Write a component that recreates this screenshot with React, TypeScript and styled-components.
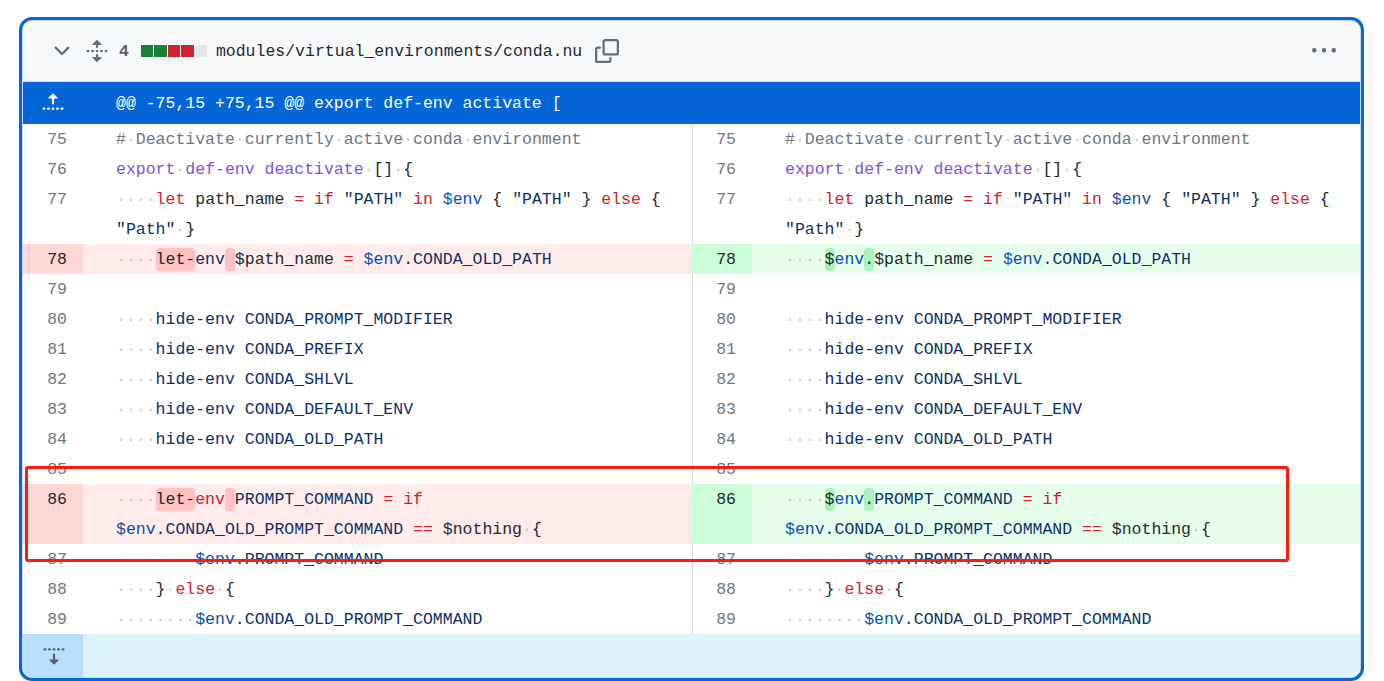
import { Fragment, ReactNode } from 'react'
import styled, { createGlobalStyle } from 'styled-components'

const mono = `'Liberation Mono', 'DejaVu Sans Mono', monospace`

const GlobalStyle = createGlobalStyle`
  html, body {
    margin: 0;
    background: #fff;
  }
`

type RowKind = 'context' | 'del' | 'add'
type TokenKind =
  | 'plain'
  | 'comment'
  | 'purple'
  | 'red'
  | 'blue'
  | 'navy'
  | 'mark'
type Token = [TokenKind, string]

const tokenColors: Record<TokenKind, string> = {
  plain: '#24292f',
  comment: '#6e7781',
  purple: '#8250df',
  red: '#cf222e',
  blue: '#0550ae',
  navy: '#0a3069',
  mark: '#24292f'
}

const gutterColors: Record<RowKind, string> = {
  context: '#fff',
  del: '#ffd7d5',
  add: '#ccffd8'
}

const codeColors: Record<RowKind, string> = {
  context: '#fff',
  del: '#ffebe9',
  add: '#e6ffec'
}

const markColors: Record<RowKind, string> = {
  context: 'transparent',
  del: '#ffc0c0',
  add: '#abf2bc'
}

// Octicons 16px paths, the package versions are drawn on a 24px grid with more padding
const iconPaths = {
  chevronDown:
    'M12.78 5.22a.749.749 0 0 1 0 1.06l-4.25 4.25a.749.749 0 0 1-1.06 0L3.22 6.28a.749.749 0 1 1 1.06-1.06L8 8.939l3.72-3.719a.749.749 0 0 1 1.06 0Z',
  unfold:
    'm8.177.677 2.896 2.896a.25.25 0 0 1-.177.427H8.75v1.25a.75.75 0 0 1-1.5 0V4H5.104a.25.25 0 0 1-.177-.427L7.823.677a.25.25 0 0 1 .354 0ZM7.25 10.75a.75.75 0 0 1 1.5 0V12h2.146a.25.25 0 0 1 .177.427l-2.896 2.896a.25.25 0 0 1-.354 0l-2.896-2.896A.25.25 0 0 1 5.104 12H7.25v-1.25Zm-5-2a.75.75 0 0 0 0-1.5h-.5a.75.75 0 0 0 0 1.5h.5ZM6 8a.75.75 0 0 1-.75.75h-.5a.75.75 0 0 1 0-1.5h.5A.75.75 0 0 1 6 8Zm2.25.75a.75.75 0 0 0 0-1.5h-.5a.75.75 0 0 0 0 1.5h.5ZM12 8a.75.75 0 0 1-.75.75h-.5a.75.75 0 0 1 0-1.5h.5A.75.75 0 0 1 12 8Zm2.25.75a.75.75 0 0 0 0-1.5h-.5a.75.75 0 0 0 0 1.5h.5Z',
  copy:
    'M0 6.75C0 5.784.784 5 1.75 5h1.5a.75.75 0 0 1 0 1.5h-1.5a.25.25 0 0 0-.25.25v7.5c0 .138.112.25.25.25h7.5a.25.25 0 0 0 .25-.25v-1.5a.75.75 0 0 1 1.5 0v1.5A1.75 1.75 0 0 1 9.25 16h-7.5A1.75 1.75 0 0 1 0 14.25ZM5 1.75C5 .784 5.784 0 6.75 0h7.5C15.216 0 16 .784 16 1.75v7.5A1.75 1.75 0 0 1 14.25 11h-7.5A1.75 1.75 0 0 1 5 9.25Zm1.75-.25a.25.25 0 0 0-.25.25v7.5c0 .138.112.25.25.25h7.5a.25.25 0 0 0 .25-.25v-7.5a.25.25 0 0 0-.25-.25Z',
  kebab:
    'M8 9a1.5 1.5 0 1 0 0-3 1.5 1.5 0 0 0 0 3ZM1.5 9a1.5 1.5 0 1 0 0-3 1.5 1.5 0 0 0 0 3Zm13 0a1.5 1.5 0 1 0 0-3 1.5 1.5 0 0 0 0 3Z',
  foldUp:
    'M7.823 1.677 4.927 4.573A.25.25 0 0 0 5.104 5H7.25v3.236a.75.75 0 1 0 1.5 0V5h2.146a.25.25 0 0 0 .177-.427L8.177 1.677a.25.25 0 0 0-.354 0ZM13.75 11a.75.75 0 0 0 0 1.5h.5a.75.75 0 0 0 0-1.5h-.5Zm-3.75.75a.75.75 0 0 1 .75-.75h.5a.75.75 0 0 1 0 1.5h-.5a.75.75 0 0 1-.75-.75ZM7.75 11a.75.75 0 0 0 0 1.5h.5a.75.75 0 0 0 0-1.5h-.5ZM4 11.75a.75.75 0 0 1 .75-.75h.5a.75.75 0 0 1 0 1.5h-.5a.75.75 0 0 1-.75-.75ZM1.75 11a.75.75 0 0 0 0 1.5h.5a.75.75 0 0 0 0-1.5h-.5Z',
  foldDown:
    'M8.177 14.323l2.896-2.896a.25.25 0 0 0-.177-.427H8.75V7.764a.75.75 0 1 0-1.5 0V11H5.104a.25.25 0 0 0-.177.427l2.896 2.896a.25.25 0 0 0 .354 0zM2.25 5a.75.75 0 0 0 0-1.5h-.5a.75.75 0 0 0 0 1.5h.5zM6 4.25a.75.75 0 0 1-.75.75h-.5a.75.75 0 0 1 0-1.5h.5a.75.75 0 0 1 .75.75zM8.25 5a.75.75 0 0 0 0-1.5h-.5a.75.75 0 0 0 0 1.5h.5zM12 4.25a.75.75 0 0 1-.75.75h-.5a.75.75 0 0 1 0-1.5h.5a.75.75 0 0 1 .75.75zm2.25.75a.75.75 0 0 0 0-1.5h-.5a.75.75 0 0 0 0 1.5h.5z'
}

const Octicon = ({ name }: { name: keyof typeof iconPaths }) => (
  <svg width="24" height="24" viewBox="0 0 16 16" fill="currentColor">
    <path d={iconPaths[name]} />
  </svg>
)

const Page = styled.div`
  padding: 17px 20px 0 19px;
`

const Card = styled.div`
  border: 3px solid #0566d8;
  border-radius: 13px;
  background: #0566d8;
`

const DiffBox = styled.div`
  border: 1px solid #d0d7de;
  border-radius: 10px;
  overflow: hidden;
  background: #fff;
`

const FileHeader = styled.div`
  display: flex;
  align-items: center;
  height: 60px;
  padding: 0 24px 0 27px;
  background: #f6f8fa;
  border-bottom: 1px solid #d0d7de;
`

const HeaderIcon = styled.span<{ $gap: number }>`
  display: flex;
  margin-right: ${({ $gap }) => $gap}px;
  color: #656d76;
`

const ChangeCount = styled.span`
  font: bold 16.5px ${mono};
  color: #57606a;
  margin-right: 12px;
`

const DiffStat = styled.div`
  display: flex;
  gap: 1px;
  margin-right: 8.5px;
`

const StatSquare = styled.span<{ $color: string }>`
  width: 12.5px;
  height: 12px;
  background: ${({ $color }) => $color};
`

const FilePath = styled.span`
  font: 16.5px ${mono};
  color: #24292f;
  margin-right: 13px;
`

const Spacer = styled.div`
  flex: 1;
`

const HunkRow = styled.div`
  display: grid;
  grid-template-columns: 60px 1fr;
  align-items: center;
  height: 42px;
  background: #0566d8;
  color: #fff;
  font: 16.5px/40px ${mono};
`

const ExpandIcon = styled.div`
  display: flex;
  justify-content: center;
  height: 24px;
`

const HunkText = styled.div`
  padding: 2px 0 0 33px;
  white-space: pre;
`

const DiffRow = styled.div`
  display: grid;
  grid-template-columns: 60px 609px 60px 1fr;
  font: 16.5px/30px ${mono};
`

const LineNo = styled.div<{ $kind: RowKind; $right?: boolean }>`
  text-align: right;
  padding: 2px 16px 0 0;
  line-height: 28px;
  background: ${({ $kind }) => gutterColors[$kind]};
  color: ${({ $kind }) => ($kind === 'context' ? '#6e7781' : '#24292f')};
  border-left: ${({ $right, $kind }) =>
    $right ? `1px solid ${$kind === 'context' ? '#d0d7de' : gutterColors[$kind]}` : 'none'};
`

const Code = styled.div<{ $kind: RowKind }>`
  padding: 0 16px 0 33px;
  white-space: pre-wrap;
  background: ${({ $kind }) => codeColors[$kind]};
  color: #24292f;
`

const Tok = styled.span<{ $token: TokenKind; $kind: RowKind }>`
  color: ${({ $token }) => tokenColors[$token]};
  line-height: 28px;
  vertical-align: -1px;
  ${({ $token, $kind }) =>
    $token === 'mark'
      ? `background: ${markColors[$kind]}; border-radius: 4px; padding: 2px 0;`
      : ''}
`

const Dots = styled.span`
  color: #c8cdd2;
`

const ExpanderRow = styled.div`
  display: grid;
  grid-template-columns: 60px 1fr;
  height: 43px;
  background: #ddf4ff;
  color: #57606a;
`

const ExpanderGutter = styled.div`
  display: flex;
  align-items: center;
  justify-content: center;
  padding: 0 0 2px 1px;
  background: #b9dfff;
`

const Annotation = styled.div`
  position: absolute;
  left: 25px;
  top: 466px;
  width: 1258px;
  height: 90px;
  border: 3px solid #ff1a0e;
  border-radius: 3px;
  pointer-events: none;
`

// Middle dots mark whitespace, they are drawn lighter than the code around them
const renderText = (text: string): ReactNode =>
  text.split(/(·+)/).map((part, index) =>
    part.startsWith('·') ? <Dots key={index}>{part}</Dots> : part
  )

const CodeLine = ({ tokens, kind }: { tokens: Token[]; kind: RowKind }) => (
  <Code $kind={kind}>
    {tokens.map(([token, text], index) => (
      <Tok key={index} $token={token} $kind={kind}>
        {renderText(text)}
      </Tok>
    ))}
  </Code>
)

type LineType = {
  no: number
  left: Token[]
  right?: Token[]
  changed?: boolean
}

const hideEnv = (name: string): Token[] => [
  ['plain', '····'],
  ['navy', `hide-env ${name}`]
]

const path77: Token[] = [
  ['plain', '····'],
  ['red', 'let'],
  ['plain', ' path_name '],
  ['red', '='],
  ['plain', ' '],
  ['red', 'if'],
  ['navy', ' "PATH" '],
  ['red', 'in'],
  ['plain', ' '],
  ['blue', '$env'],
  ['plain', ' { '],
  ['navy', '"PATH"'],
  ['plain', ' } '],
  ['red', 'else'],
  ['plain', ' { '],
  ['navy', '"Path"'],
  ['plain', '·}']
]

const prompt86Tail: Token[] = [
  ['navy', 'PROMPT_COMMAND '],
  ['red', '= if '],
  ['blue', '$env'],
  ['navy', '.CONDA_OLD_PROMPT_COMMAND '],
  ['red', '=='],
  ['plain', ' $nothing·{']
]

const lines: LineType[] = [
  {
    no: 75,
    left: [['comment', '#·Deactivate·currently·active·conda·environment']]
  },
  {
    no: 76,
    left: [
      ['purple', 'export·def-env deactivate'],
      ['plain', '·[]·{']
    ]
  },
  { no: 77, left: path77 },
  {
    no: 78,
    changed: true,
    left: [
      ['plain', '····'],
      ['mark', 'let-'],
      ['navy', 'env'],
      ['mark', ' '],
      ['plain', '$path_name '],
      ['red', '='],
      ['plain', ' '],
      ['blue', '$env'],
      ['navy', '.CONDA_OLD_PATH']
    ],
    right: [
      ['plain', '····'],
      ['mark', '$'],
      ['blue', 'env'],
      ['mark', '.'],
      ['plain', '$path_name '],
      ['red', '='],
      ['plain', ' '],
      ['blue', '$env'],
      ['navy', '.CONDA_OLD_PATH']
    ]
  },
  { no: 79, left: [] },
  { no: 80, left: hideEnv('CONDA_PROMPT_MODIFIER') },
  { no: 81, left: hideEnv('CONDA_PREFIX') },
  { no: 82, left: hideEnv('CONDA_SHLVL') },
  { no: 83, left: hideEnv('CONDA_DEFAULT_ENV') },
  { no: 84, left: hideEnv('CONDA_OLD_PATH') },
  { no: 85, left: [] },
  {
    no: 86,
    changed: true,
    left: [
      ['plain', '····'],
      ['mark', 'let-'],
      ['red', 'env'],
      ['mark', ' '],
      ...prompt86Tail
    ],
    right: [
      ['plain', '····'],
      ['mark', '$'],
      ['blue', 'env'],
      ['mark', '.'],
      ...prompt86Tail
    ]
  },
  {
    no: 87,
    left: [
      ['plain', '········'],
      ['blue', '$env'],
      ['navy', '.PROMPT_COMMAND']
    ]
  },
  {
    no: 88,
    left: [
      ['plain', '····}·'],
      ['red', 'else'],
      ['plain', '·{']
    ]
  },
  {
    no: 89,
    left: [
      ['plain', '········'],
      ['blue', '$env'],
      ['navy', '.CONDA_OLD_PROMPT_COMMAND']
    ]
  }
]

const statColors = ['#1a7f37', '#1a7f37', '#cf222e', '#cf222e', '#e4e7eb']

export default function App() {
  return (
    <Page>
      <GlobalStyle />
      <Card>
        <DiffBox>
          <FileHeader>
            <HeaderIcon $gap={11}>
              <Octicon name="chevronDown" />
            </HeaderIcon>
            <HeaderIcon $gap={10}>
              <Octicon name="unfold" />
            </HeaderIcon>
            <ChangeCount>4</ChangeCount>
            <DiffStat>
              {statColors.map((color, index) => (
                <StatSquare key={index} $color={color} />
              ))}
            </DiffStat>
            <FilePath>modules/virtual_environments/conda.nu</FilePath>
            <HeaderIcon $gap={0}>
              <Octicon name="copy" />
            </HeaderIcon>
            <Spacer />
            <HeaderIcon $gap={0}>
              <Octicon name="kebab" />
            </HeaderIcon>
          </FileHeader>
          <HunkRow>
            <ExpandIcon>
              <Octicon name="foldUp" />
            </ExpandIcon>
            <HunkText>@@ -75,15 +75,15 @@ export def-env activate [</HunkText>
          </HunkRow>
          {lines.map(({ no, left, right, changed }) => (
            <Fragment key={no}>
              <DiffRow>
                <LineNo $kind={changed ? 'del' : 'context'}>{no}</LineNo>
                <CodeLine tokens={left} kind={changed ? 'del' : 'context'} />
                <LineNo $kind={changed ? 'add' : 'context'} $right>
                  {no}
                </LineNo>
                <CodeLine
                  tokens={right ?? left}
                  kind={changed ? 'add' : 'context'}
                />
              </DiffRow>
            </Fragment>
          ))}
          <ExpanderRow>
            <ExpanderGutter>
              <Octicon name="foldDown" />
            </ExpanderGutter>
          </ExpanderRow>
        </DiffBox>
      </Card>
      <Annotation />
    </Page>
  )
}
